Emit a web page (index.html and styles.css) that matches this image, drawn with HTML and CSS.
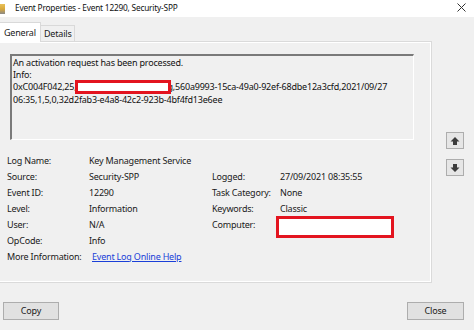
FILE: index.html
```html
<!DOCTYPE html>
<html>
<head>
<meta charset="utf-8">
<link rel="stylesheet" href="styles.css">
</head>
<body>
<div class="window">
  <div class="titlebar">
    <span class="appicon"></span>
    <span class="title">Event Properties - Event 12290, Security-SPP</span>
    <svg class="closex" width="9" height="9" viewBox="0 0 9 9"><path d="M0.5 0.5 L8.5 8.5 M8.5 0.5 L0.5 8.5" stroke="#333" stroke-width="1" fill="none"/></svg>
  </div>
  <div class="tabs">
    <div class="tab active">General</div>
    <div class="tab">Details</div>
  </div>
  <div class="main">
    <div class="panel">
      <div class="textbox">
        <div>An activation request has been processed.</div>
        <div>Info:</div>
        <div>0xC004F042,25,<span class="redact-inline"></span>g,560a9993-15ca-49a0-92ef-68dbe12a3cfd,2021/09/27</div>
        <div>06:35,1,5,0,32d2fab3-e4a8-42c2-923b-4bf4fd13e6ee</div>
      </div>
      <div class="fields">
        <div class="lbl">Log Name:</div><div class="val">Key Management Service</div><div></div><div></div>
        <div class="lbl">Source:</div><div class="val">Security-SPP</div><div class="lbl">Logged:</div><div class="val">27/09/2021 08:35:55</div>
        <div class="lbl">Event ID:</div><div class="val">12290</div><div class="lbl">Task Category:</div><div class="val">None</div>
        <div class="lbl">Level:</div><div class="val">Information</div><div class="lbl">Keywords:</div><div class="val">Classic</div>
        <div class="lbl">User:</div><div class="val">N/A</div><div class="lbl">Computer:</div><div class="val"><div class="redact-box"></div></div>
        <div class="lbl">OpCode:</div><div class="val">Info</div><div></div><div></div>
        <div class="lbl">More Information:</div><div class="val"><a class="link">Event Log Online Help</a></div><div></div><div></div>
      </div>
    </div>
    <div class="side">
      <div class="arrowbtn">
        <svg width="10" height="10" viewBox="0 0 10 10"><path d="M5 1 L9.5 5.5 L7 5.5 L7 9 L3 9 L3 5.5 L0.5 5.5 Z" fill="#3c3c3c"/></svg>
      </div>
      <div class="arrowbtn">
        <svg width="10" height="10" viewBox="0 0 10 10"><path d="M5 9 L9.5 4.5 L7 4.5 L7 1 L3 1 L3 4.5 L0.5 4.5 Z" fill="#3c3c3c"/></svg>
      </div>
    </div>
  </div>
  <div class="footer">
    <div class="btn copy">Copy</div>
    <div class="btn close">Close</div>
  </div>
</div>
</body>
</html>
```

FILE: styles.css
```css
html, body {
  margin: 0;
  padding: 0;
}
body {
  width: 474px;
  height: 330px;
  overflow: hidden;
  background: #f0f0f0;
  font-family: "Noto Sans", "Open Sans", sans-serif;
  font-size: 9px;
  letter-spacing: -0.2px;
  color: #1a1a1a;
}
.window {
  display: flex;
  flex-direction: column;
  height: 330px;
}
.titlebar {
  height: 17px;
  background: #ffffff;
  display: flex;
  align-items: center;
  flex: none;
}
.appicon {
  width: 5px;
  height: 10px;
  background: linear-gradient(180deg, #e8c15a 0%, #d9a83a 50%, #8a8a8a 100%);
  flex: none;
}
.title {
  margin-left: 10px;
  margin-top: -3px;
  font-size: 8.3px;
  color: #111;
  flex: 1;
  white-space: nowrap;
}
.closex {
  margin-right: 8px;
  margin-top: -2px;
}
.tabs {
  height: 24px;
  display: flex;
  align-items: flex-end;
  flex: none;
}
.tab {
  height: 16px;
  line-height: 15px;
  padding: 0 3px 0 4px;
  box-sizing: border-box;
  border: 1px solid #d9d9d9;
  border-bottom: none;
  background: #f0f0f0;
  white-space: nowrap;
}
.tab.active {
  height: 20px;
  line-height: 19px;
  width: 41px;
  background: #ffffff;
  border-left: none;
  margin-bottom: -1px;
  position: relative;
  z-index: 1;
}
.tab + .tab {
  border-left: none;
  width: 34px;
  padding-left: 3px;
}
.main {
  display: flex;
  height: 242px;
  flex: none;
}
.panel {
  width: 432px;
  box-sizing: border-box;
  border: 1px solid #dadada;
  border-left: none;
  box-shadow: inset -1px -1px 0 #ffffff, inset 0 1px 0 #ffffff;
  background: #f0f0f0;
  padding: 12px 0 0 0;
}
.textbox {
  margin-left: 10px;
  width: 404px;
  height: 86px;
  box-sizing: border-box;
  border-top: 2px solid #7a7a7a;
  border-left: 2px solid #7a7a7a;
  border-right: 1px solid #ffffff;
  border-bottom: 1px solid #ffffff;
  padding: 1px 0 0 1px;
  line-height: 11.6px;
  color: #111;
  white-space: nowrap;
}
.redact-inline {
  display: inline-block;
  width: 96px;
  height: 14px;
  box-sizing: border-box;
  border: 3px solid #e3141f;
  background: #ffffff;
  vertical-align: -4px;
  margin-left: -1px;
  margin-right: -4px;
  position: relative;
  z-index: 1;
}
.fields {
  display: grid;
  grid-template-columns: 82px 123px 68px 1fr;
  grid-auto-rows: 16px;
  align-items: center;
  margin-top: 12px;
  padding-left: 7px;
  color: #1a1a1a;
}
.lbl, .val {
  white-space: nowrap;
}
.val .redact-box {
  width: 118px;
  height: 22px;
  box-sizing: border-box;
  border: 3px solid #e3141f;
  background: #ffffff;
  margin: 0 0 -6px -4px;
}
.link {
  color: #1a3fd8;
  text-decoration: underline;
  margin-left: 3px;
}
.side {
  flex: 1;
  display: flex;
  flex-direction: column;
  align-items: flex-start;
  padding: 91px 0 0 14px;
  gap: 10px;
}
.arrowbtn {
  width: 18px;
  height: 17px;
  box-sizing: border-box;
  border: 1px solid #adadad;
  background: #e6e6e6;
  display: flex;
  align-items: center;
  justify-content: center;
}
.footer {
  display: flex;
  justify-content: space-between;
  padding: 19px 10px 0 3px;
}
.btn {
  width: 56px;
  height: 18px;
  box-sizing: border-box;
  border: 1px solid #adadad;
  background: #e1e1e1;
  text-align: center;
  line-height: 16px;
}
.btn.close {
  width: 57px;
}
```
